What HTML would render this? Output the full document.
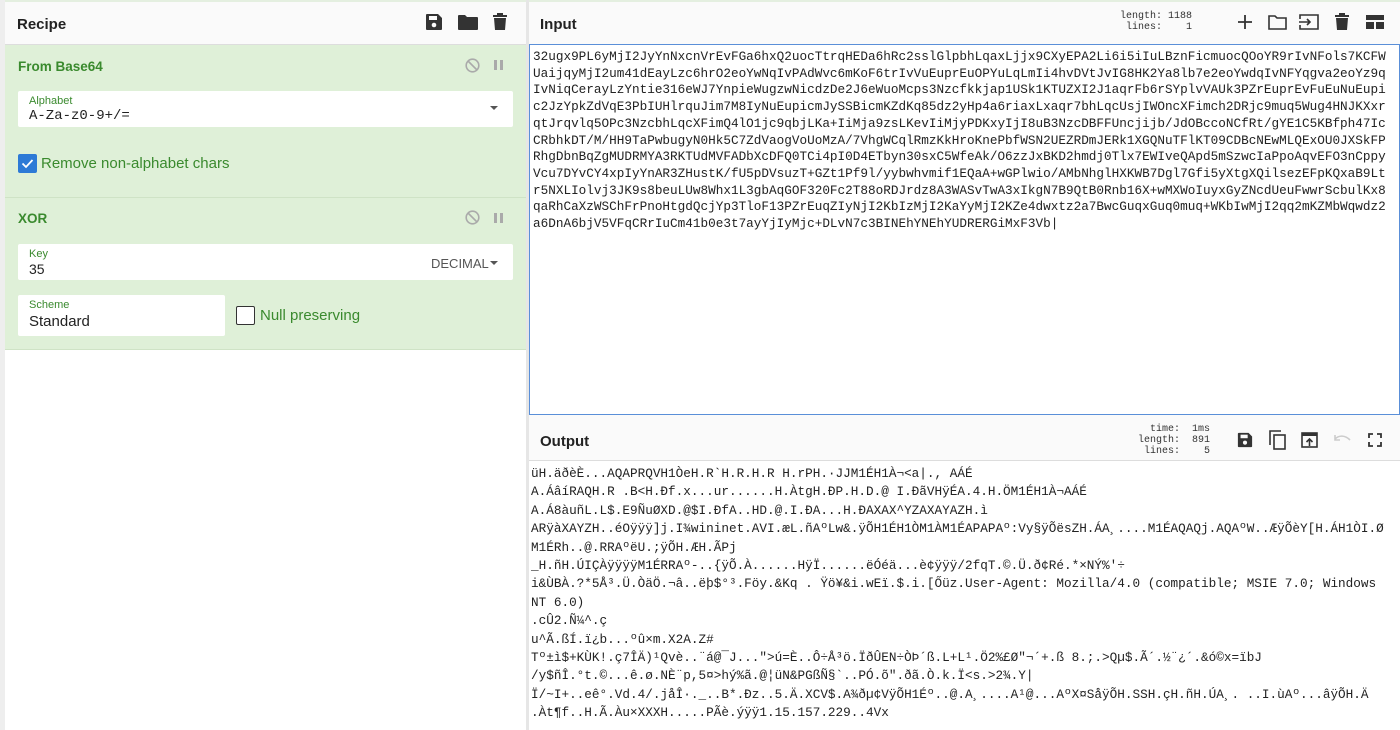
<!DOCTYPE html>
<html><head><meta charset="utf-8"><style>
*{box-sizing:border-box;margin:0;padding:0}
body{width:1400px;height:730px;overflow:hidden;background:#fff;font-family:"Liberation Sans",sans-serif;position:relative}
.abs{position:absolute}
.mono{font-family:"Liberation Mono",monospace}
.hdr{background:#fafafa;border-bottom:1px solid #ddd}
.title{font-weight:bold;font-size:15px;color:#222}
.op{background:#dff0d8;border-bottom:1px solid #cfe3c6}
.opt{color:#3a8a2e;font-weight:bold;font-size:13.5px}
.field{background:#fff;border-radius:2px}
.lbl{color:#3a8a2e;font-size:11px}
.val{color:#222;font-size:14px}
.pre{white-space:pre;font-size:12.7px;color:#222}
svg{position:absolute}
</style></head><body>
<div class="abs" style="left:0;top:0;width:1400px;height:2px;background:#e4efe0"></div>
<!-- left -->
<div class="abs" style="left:0;top:0;width:5px;height:730px;background:#eee"></div>
<div class="abs hdr" style="left:5px;top:2px;width:521px;height:43px"></div>
<div class="abs title" style="left:17px;top:16px">Recipe</div>
<svg style="left:425px;top:13px" width="18" height="18" viewBox="0 0 18 18"><path d="M1 2a1 1 0 0 1 1-1h11l4 4v11a1 1 0 0 1-1 1H2a1 1 0 0 1-1-1z" fill="#333"/><rect x="4" y="3" width="8" height="4" fill="#fafafa"/><circle cx="9" cy="12" r="2.3" fill="#fafafa"/></svg>
<svg style="left:458px;top:14px" width="20" height="16" viewBox="0 0 20 16"><path d="M0 2a1 1 0 0 1 1-1h6l2 2h10a1 1 0 0 1 1 1v11a1 1 0 0 1-1 1H1a1 1 0 0 1-1-1z" fill="#333"/></svg>
<svg style="left:492px;top:13px" width="16" height="18" viewBox="0 0 16 18"><rect x="1" y="2" width="14" height="2" fill="#333"/><rect x="5" y="0" width="6" height="2" fill="#333"/><path d="M2 5h12l-1 12H3z" fill="#333"/></svg>
<div class="abs op" style="left:5px;top:45px;width:521px;height:153px"></div>
<div class="abs opt" style="left:18px;top:59px">From Base64</div>
<svg style="left:465px;top:58px" width="15" height="15" viewBox="0 0 15 15"><circle cx="7.5" cy="7.5" r="6.3" fill="none" stroke="#aaa" stroke-width="1.6"/><path d="M3 3l9 9" stroke="#aaa" stroke-width="1.6"/></svg>
<div class="abs" style="left:494px;top:60px;width:3px;height:10px;background:#aaa"></div><div class="abs" style="left:500px;top:60px;width:3px;height:10px;background:#aaa"></div>
<div class="abs field" style="left:18px;top:91px;width:495px;height:36px"></div>
<div class="abs lbl" style="left:29px;top:95px">Alphabet</div>
<div class="abs val mono" style="left:29px;top:108px;font-size:14px">A-Za-z0-9+/=</div>
<div class="abs" style="left:490px;top:106px;border:4px solid transparent;border-top:4px solid #555;border-bottom:0"></div>
<div class="abs" style="left:18px;top:154px;width:19px;height:19px;background:#2d7ad6;border-radius:2px"></div>
<svg style="left:21px;top:158px" width="13" height="11" viewBox="0 0 13 11"><path d="M1.5 5.5l3.5 3.5 6.5-7" fill="none" stroke="#fff" stroke-width="1.8"/></svg>
<div class="abs" style="left:41px;top:155px;color:#3a8a2e;font-size:15px">Remove non-alphabet chars</div>
<div class="abs op" style="left:5px;top:198px;width:521px;height:152px"></div>
<div class="abs opt" style="left:18px;top:211px">XOR</div>
<svg style="left:465px;top:210px" width="15" height="15" viewBox="0 0 15 15"><circle cx="7.5" cy="7.5" r="6.3" fill="none" stroke="#aaa" stroke-width="1.6"/><path d="M3 3l9 9" stroke="#aaa" stroke-width="1.6"/></svg>
<div class="abs" style="left:494px;top:213px;width:3px;height:10px;background:#aaa"></div><div class="abs" style="left:500px;top:213px;width:3px;height:10px;background:#aaa"></div>
<div class="abs field" style="left:18px;top:244px;width:495px;height:36px"></div>
<div class="abs lbl" style="left:29px;top:248px">Key</div>
<div class="abs val" style="left:29px;top:261px">35</div>
<div class="abs" style="left:431px;top:256px;color:#555;font-size:13px">DECIMAL</div>
<div class="abs" style="left:490px;top:261px;border:4px solid transparent;border-top:4px solid #555;border-bottom:0"></div>
<div class="abs field" style="left:18px;top:295px;width:207px;height:41px"></div>
<div class="abs lbl" style="left:29px;top:299px">Scheme</div>
<div class="abs val" style="left:29px;top:313px;font-size:15px">Standard</div>
<div class="abs" style="left:236px;top:306px;width:19px;height:19px;border:1.5px solid #333;border-radius:2px;background:#fff"></div>
<div class="abs" style="left:260px;top:307px;color:#3a8a2e;font-size:15px">Null preserving</div>
<div class="abs" style="left:526px;top:0;width:3px;height:730px;background:#e6e6e6"></div>
<!-- input -->
<div class="abs hdr" style="left:529px;top:2px;width:871px;height:42px;border-bottom:none"></div>
<div class="abs title" style="left:540px;top:16px">Input</div>
<div class="abs mono" style="left:1120px;top:11px;font-size:10px;line-height:11px;color:#333;white-space:pre;text-align:right">length: 1188
 lines:    1</div>
<svg style="left:1237px;top:14px" width="16" height="16" viewBox="0 0 16 16"><path d="M8 1v14M1 8h14" stroke="#333" stroke-width="1.8"/></svg>
<svg style="left:1268px;top:14px" width="19" height="16" viewBox="0 0 19 16"><path d="M1 2h6l2 2h9v11H1z" fill="none" stroke="#333" stroke-width="1.6"/></svg>
<svg style="left:1299px;top:14px" width="20" height="16" viewBox="0 0 20 16"><path d="M1 5V1h18v14H1v-4" fill="none" stroke="#333" stroke-width="1.6"/><path d="M0 8h11M8 5l3 3-3 3" fill="none" stroke="#333" stroke-width="1.6"/></svg>
<svg style="left:1335px;top:13px" width="14" height="18" viewBox="0 0 14 18"><rect x="0" y="2" width="14" height="2" fill="#333"/><rect x="4" y="0" width="6" height="2" fill="#333"/><path d="M1 5h12l-1 12H2z" fill="#333"/></svg>
<svg style="left:1366px;top:15px" width="18" height="14" viewBox="0 0 18 14"><rect x="0" y="0" width="18" height="5" fill="#333"/><rect x="0" y="7" width="8" height="7" fill="#333"/><rect x="10" y="7" width="8" height="7" fill="#333"/></svg>
<div class="abs" style="left:529px;top:44px;width:871px;height:371px;border:1px solid #5a8fd8"></div>
<div class="abs mono pre" style="left:533px;top:49px;line-height:16.7px">32ugx9PL6yMjI2JyYnNxcnVrEvFGa6hxQ2uocTtrqHEDa6hRc2sslGlpbhLqaxLjjx9CXyEPA2Li6i5iIuLBznFicmuocQOoYR9rIvNFols7KCFW
UaijqyMjI2um41dEayLzc6hrO2eoYwNqIvPAdWvc6mKoF6trIvVuEuprEuOPYuLqLmIi4hvDVtJvIG8HK2Ya8lb7e2eoYwdqIvNFYqgva2eoYz9q
IvNiqCerayLzYntie316eWJ7YnpieWugzwNicdzDe2J6eWuoMcps3Nzcfkkjap1USk1KTUZXI2J1aqrFb6rSYplvVAUk3PZrEuprEvFuEuNuEupi
c2JzYpkZdVqE3PbIUHlrquJim7M8IyNuEupicmJySSBicmKZdKq85dz2yHp4a6riaxLxaqr7bhLqcUsjIWOncXFimch2DRjc9muq5Wug4HNJKXxr
qtJrqvlq5OPc3NzcbhLqcXFimQ4lO1jc9qbjLKa+IiMja9zsLKevIiMjyPDKxyIjI8uB3NzcDBFFUncjijb/JdOBccoNCfRt/gYE1C5KBfph47Ic
CRbhkDT/M/HH9TaPwbugyN0Hk5C7ZdVaogVoUoMzA/7VhgWCqlRmzKkHroKnePbfWSN2UEZRDmJERk1XGQNuTFlKT09CDBcNEwMLQExOU0JXSkFP
RhgDbnBqZgMUDRMYA3RKTUdMVFADbXcDFQ0TCi4pI0D4ETbyn30sxC5WfeAk/O6zzJxBKD2hmdj0Tlx7EWIveQApd5mSzwcIaPpoAqvEFO3nCppy
Vcu7DYvCY4xpIyYnAR3ZHustK/fU5pDVsuzT+GZt1Pf9l/yybwhvmif1EQaA+wGPlwio/AMbNhglHXKWB7Dgl7Gfi5yXtgXQilsezEFpKQxaB9Lt
r5NXLIolvj3JK9s8beuLUw8Whx1L3gbAqGOF320Fc2T88oRDJrdz8A3WASvTwA3xIkgN7B9QtB0Rnb16X+wMXWoIuyxGyZNcdUeuFwwrScbulKx8
qaRhCaXzWSChFrPnoHtgdQcjYp3TloF13PZrEuqZIyNjI2KbIzMjI2KaYyMjI2KZe4dwxtz2a7BwcGuqxGuq0muq+WKbIwMjI2qq2mKZMbWqwdz2
a6DnA6bjV5VFqCRrIuCm41b0e3t7ayYjIyMjc+DLvN7c3BINEhYNEhYUDRERGiMxF3Vb|</div>
<!-- output -->
<div class="abs hdr" style="left:529px;top:415px;width:871px;height:46px"></div>
<div class="abs title" style="left:540px;top:433px">Output</div>
<div class="abs mono" style="left:1138px;top:424px;font-size:10px;line-height:11px;color:#333;white-space:pre">  time:  1ms
length:  891
 lines:    5</div>
<svg style="left:1237px;top:432px" width="16" height="16" viewBox="0 0 18 18"><path d="M1 2a1 1 0 0 1 1-1h11l4 4v11a1 1 0 0 1-1 1H2a1 1 0 0 1-1-1z" fill="#333"/><rect x="4" y="3" width="8" height="4" fill="#fafafa"/><circle cx="9" cy="12" r="2.3" fill="#fafafa"/></svg>
<svg style="left:1269px;top:430px" width="17" height="20" viewBox="0 0 17 20"><path d="M1 15V1h11" fill="none" stroke="#333" stroke-width="1.6"/><rect x="5" y="5" width="11" height="14" fill="none" stroke="#333" stroke-width="1.6"/></svg>
<svg style="left:1301px;top:432px" width="17" height="16" viewBox="0 0 17 16"><rect x="1" y="1" width="15" height="14" fill="none" stroke="#333" stroke-width="1.6"/><rect x="1" y="1" width="15" height="3" fill="#333"/><path d="M8.5 14V7M5.5 10l3-3 3 3" fill="none" stroke="#333" stroke-width="1.6"/></svg>
<svg style="left:1333px;top:434px" width="18" height="12" viewBox="0 0 18 12"><path d="M2 5c4-4 10-4 15 1M2 1v5h5" fill="none" stroke="#ccc" stroke-width="1.6"/></svg>
<svg style="left:1368px;top:433px" width="14" height="14" viewBox="0 0 14 14"><path d="M1 5V1h4M9 1h4v4M13 9v4H9M5 13H1V9" fill="none" stroke="#333" stroke-width="1.8"/></svg>
<div class="abs mono pre" style="left:531px;top:465px;line-height:18.4px">üH.äðèÈ...AQAPRQVH1ÒeH.R`H.R.H.R H.rPH.·JJM1ÉH1À¬&lt;a|., AÁÉ
A.ÁâíRAQH.R .B&lt;H.Ðf.x...ur......H.ÀtgH.ÐP.H.D.@ I.ÐãVHÿÉA.4.H.ÖM1ÉH1À¬AÁÉ
A.Á8àuñL.L$.E9ÑuØXD.@$I.ÐfA..HD.@.I.ÐA...H.ÐAXAX^YZAXAYAZH.ì
ARÿàXAYZH..éOÿÿÿ]j.I¾wininet.AVI.æL.ñAºLw&amp;.ÿÕH1ÉH1ÒM1ÀM1ÉAPAPAº:Vy§ÿÕësZH.ÁA¸....M1ÉAQAQj.AQAºW..ÆÿÕèY[H.ÁH1ÒI.Ø
M1ÉRh..@.RRAºëU.;ÿÕH.ÆH.ÃPj
_H.ñH.ÚIÇÀÿÿÿÿM1ÉRRAº-..{ÿÕ.À......HÿÏ......ëÓéä...è¢ÿÿÿ/2fqT.©.Ü.ð¢Ré.*×NÝ%'÷
i&amp;ÙBÀ.?*5Å³.Ü.ÒäÖ.¬â..ëþ$°³.Föy.&amp;Kq . Ÿö¥&amp;i.wEï.$.i.[Őüz.User-Agent: Mozilla/4.0 (compatible; MSIE 7.0; Windows
NT 6.0)
.cÛ2.Ñ¼^.ç
u^Ã.ßÍ.ï¿b...ºû×m.X2A.Z#
Tº±ì$+KÙK!.ç7ÎÄ)¹Qvè..¨á@¯J...">ú=È..Ô÷Å³ö.ÏðÛEN÷ÒÞ´ß.L+L¹.Ö2%£Ø"¬´+.ß 8.;.>Qµ$.Ã´.½¨¿´.&amp;ó©x=ïbJ
/y$ñÎ.°t.©...ê.ø.NÈ¨p,5¤>hý%ã.@¦üN&amp;PGßÑ§`..PÓ.õ".ðã.Ò.k.Ï&lt;s.>2¾.Y|
Ï/~I+..eê°.Vd.4/.jåÎ·._..B*.Ðz..5.Ä.XCV$.A¾ðµ¢VÿÕH1Éº..@.A¸....A¹@...AºX¤SåÿÕH.SSH.çH.ñH.ÚA¸. ..I.ùAº...âÿÕH.Ä
.Àt¶f..H.Ã.Àu×XXXH.....PÃè.ýÿÿ1.15.157.229..4Vx</div>
</body></html>
